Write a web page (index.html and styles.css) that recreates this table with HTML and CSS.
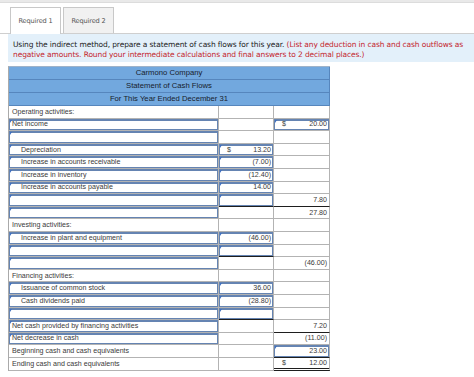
FILE: index.html
```html
<!DOCTYPE html>
<html>
<head>
<meta charset="utf-8">
<link rel="stylesheet" href="styles.css">
</head>
<body>
<div class="topbar"></div>
<div class="tabs">
  <div class="tab active">Required 1</div>
  <div class="tab">Required 2</div>
</div>
<div class="instr">
  Using the indirect method, prepare a statement of cash flows for this year. <span class="red">(List any deduction in cash and cash outflows as<br>negative amounts. Round your intermediate calculations and final answers to 2 decimal places.)</span>
</div>
<table class="cf">
  <colgroup><col class="c1"><col class="c2"><col class="c3"></colgroup>
  <tr class="hd"><td colspan="3">Carmono Company</td></tr>
  <tr class="hd"><td colspan="3">Statement of Cash Flows</td></tr>
  <tr class="hd"><td colspan="3">For This Year Ended December 31</td></tr>
  <tr><td class="lbl">Operating activities:</td><td></td><td></td></tr>
  <tr><td class="lbl in">Net income</td><td></td><td class="in num"><div class="v"><span>$</span><span>20.00</span></div></td></tr>
  <tr><td class="lbl in"></td><td></td><td></td></tr>
  <tr><td class="lbl ind in">Depreciation</td><td class="in num"><div class="v"><span>$</span><span>13.20</span></div></td><td></td></tr>
  <tr><td class="lbl ind in">Increase in accounts receivable</td><td class="in num"><div class="v"><span></span><span>(7.00)</span></div></td><td></td></tr>
  <tr><td class="lbl ind in">Increase in inventory</td><td class="in num"><div class="v"><span></span><span>(12.40)</span></div></td><td></td></tr>
  <tr><td class="lbl ind in">Increase in accounts payable</td><td class="in num"><div class="v"><span></span><span>14.00</span></div></td><td></td></tr>
  <tr><td class="lbl in"></td><td class="in tot"></td><td class="num tot"><div class="v"><span></span><span>7.80</span></div></td></tr>
  <tr><td class="lbl in"></td><td></td><td class="num"><div class="v"><span></span><span>27.80</span></div></td></tr>
  <tr><td class="lbl">Investing activities:</td><td></td><td></td></tr>
  <tr><td class="lbl ind in">Increase in plant and equipment</td><td class="in num"><div class="v"><span></span><span>(46.00)</span></div></td><td></td></tr>
  <tr><td class="lbl in"></td><td class="in tot"></td><td></td></tr>
  <tr><td class="lbl in"></td><td></td><td class="num"><div class="v"><span></span><span>(46.00)</span></div></td></tr>
  <tr><td class="lbl">Financing activities:</td><td></td><td></td></tr>
  <tr><td class="lbl ind in">Issuance of common stock</td><td class="in num"><div class="v"><span></span><span>36.00</span></div></td><td></td></tr>
  <tr><td class="lbl ind in">Cash dividends paid</td><td class="in num"><div class="v"><span></span><span>(28.80)</span></div></td><td></td></tr>
  <tr><td class="lbl in"></td><td class="in tot"></td><td></td></tr>
  <tr><td class="lbl in">Net cash provided by financing activities</td><td></td><td class="num tot"><div class="v"><span></span><span>7.20</span></div></td></tr>
  <tr><td class="lbl in">Net decrease in cash</td><td></td><td class="num"><div class="v"><span></span><span>(11.00)</span></div></td></tr>
  <tr><td class="lbl">Beginning cash and cash equivalents</td><td></td><td class="in num tot"><div class="v"><span></span><span>23.00</span></div></td></tr>
  <tr><td class="lbl">Ending cash and cash equivalents</td><td></td><td class="num dbl"><div class="v"><span>$</span><span>12.00</span></div></td></tr>
</table>
</body>
</html>
```

FILE: styles.css
```css
html, body {
  margin: 0;
  padding: 0;
  background: #fff;
}
body {
  font-family: "Liberation Sans", Arial, sans-serif;
  color: #3a3a3a;
}
.topbar {
  height: 2px;
  background: #e9e9e9;
  border-bottom: 1px solid #dcdcdc;
}
.tabs {
  display: flex;
  gap: 2px;
  margin-top: 4px;
  padding-left: 10px;
  border-bottom: 1px solid #cfcfcf;
  height: 26px;
}
.tab {
  width: 51px;
  height: 26px;
  box-sizing: border-box;
  border: 1px solid #c8c8c8;
  border-bottom: none;
  background: #f1f1f1;
  font-family: "DejaVu Sans", Verdana, sans-serif;
  font-size: 6.6px;
  color: #555;
  display: flex;
  align-items: center;
  justify-content: center;
  letter-spacing: -0.15px;
}
.tab.active {
  background: #fff;
  height: 27px;
}
.instr {
  margin-left: 8px;
  background: #e3f0fa;
  padding: 6px 5px 3px 5px;
  height: 19px;
  font-family: "DejaVu Sans", Verdana, sans-serif;
  font-size: 7.5px;
  line-height: 10px;
  color: #222;
  letter-spacing: -0.12px;
  white-space: nowrap;
}
.red {
  color: #c4262e;
}
.cf {
  margin: 4px 0 0 8px;
  border-collapse: separate;
  border-spacing: 0;
  width: 321px;
  table-layout: fixed;
  border-top: 1px solid #9fb3c9;
  border-left: 1px solid #aaa;
  font-size: 7.1px;
}
.c1 { width: 210px; }
.c2 { width: 55px; }
.c3 { width: 56px; }
.cf td {
  box-sizing: border-box;
  height: 12.6px;
  padding: 0;
  border-right: 1px solid #b3b3b3;
  border-bottom: 1px solid #b3b3b3;
  position: relative;
  white-space: nowrap;
  overflow: hidden;
  vertical-align: middle;
  line-height: 10px;
}
.cf tr.hd td {
  height: 13px;
  background: #72a8de;
  border-right: 1px solid #5686bd;
  border-bottom: 1px solid #5686bd;
  text-align: center;
  color: #17212c;
  font-size: 7.7px;
}
.lbl {
  padding-left: 3px !important;
}
.lbl.ind {
  padding-left: 12px !important;
}
.in {
  box-shadow: inset 0 0 0 1px #6584b2, inset 0 1px 0 1px #6584b2;
}
.in::before {
  content: "";
  position: absolute;
  left: 1px;
  top: 1px;
  border-top: 3px solid #3f6fc0;
  border-right: 2px solid transparent;
}
.cf td.tot {
  border-bottom: 1px solid #1e1e1e;
}
.cf td.dbl {
  border-bottom: 3px double #1e1e1e;
}
.v {
  display: flex;
  justify-content: space-between;
  padding: 0 2px 0 8px;
}
```
